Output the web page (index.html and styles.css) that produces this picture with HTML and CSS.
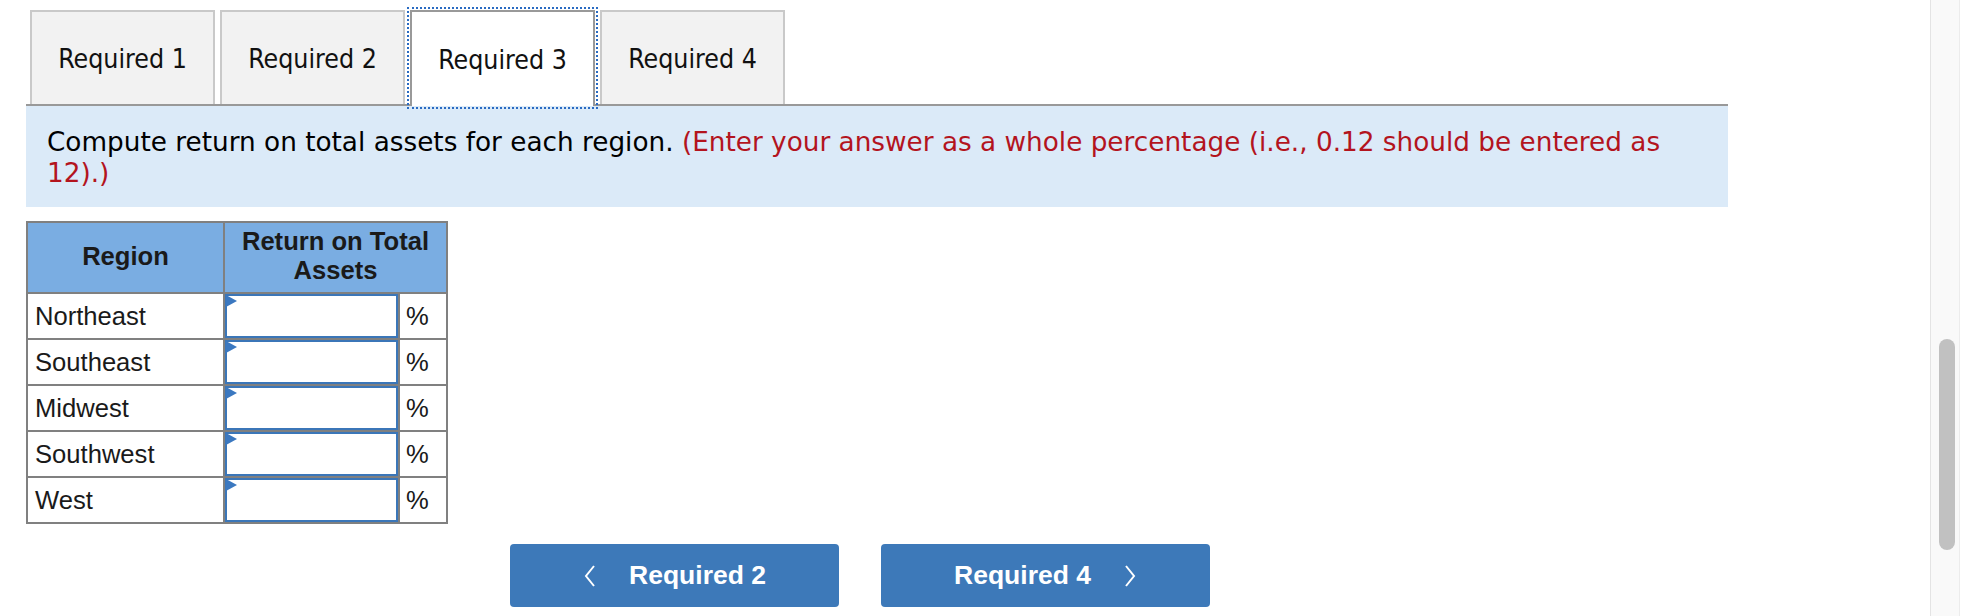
FILE: index.html
```html
<!DOCTYPE html>
<html lang="en">
<head>
<meta charset="utf-8">
<title>Required 3</title>
<link rel="stylesheet" href="styles.css">
</head>
<body>
<div class="page">
  <main class="content">
    <div class="tabs">
      <div class="tab">Required 1</div>
      <div class="tab">Required 2</div>
      <div class="tab tab-active">Required 3</div>
      <div class="tab">Required 4</div>
    </div>
    <div class="panel">
      <p class="instr">Compute return on total assets for each region. <span class="hint">(Enter your answer as a whole percentage (i.e., 0.12 should be entered as</span><br><span class="hint">12).)</span></p>
    </div>
    <table class="grid">
      <colgroup>
        <col class="col-name">
        <col class="col-input">
        <col class="col-pct">
      </colgroup>
      <thead>
        <tr>
          <th>Region</th>
          <th colspan="2">Return on Total<br>Assets</th>
        </tr>
      </thead>
      <tbody>
        <tr>
          <td class="c-name">Northeast</td>
          <td class="c-input"><div class="field"><span class="flag"></span><input type="text" aria-label="Northeast"></div></td>
          <td class="c-pct">%</td>
        </tr>
        <tr>
          <td class="c-name">Southeast</td>
          <td class="c-input"><div class="field"><span class="flag"></span><input type="text" aria-label="Southeast"></div></td>
          <td class="c-pct">%</td>
        </tr>
        <tr>
          <td class="c-name">Midwest</td>
          <td class="c-input"><div class="field"><span class="flag"></span><input type="text" aria-label="Midwest"></div></td>
          <td class="c-pct">%</td>
        </tr>
        <tr>
          <td class="c-name">Southwest</td>
          <td class="c-input"><div class="field"><span class="flag"></span><input type="text" aria-label="Southwest"></div></td>
          <td class="c-pct">%</td>
        </tr>
        <tr>
          <td class="c-name">West</td>
          <td class="c-input"><div class="field"><span class="flag"></span><input type="text" aria-label="West"></div></td>
          <td class="c-pct">%</td>
        </tr>
      </tbody>
    </table>
    <div class="nav">
      <button class="nav-btn" type="button">
        <svg class="chev" width="14" height="24" viewBox="0 0 14 24"><polyline points="11,2 3,12 11,22" fill="none" stroke="#fff" stroke-width="2"/></svg>
        <span>Required 2</span>
      </button>
      <button class="nav-btn" type="button">
        <span>Required 4</span>
        <svg class="chev" width="14" height="24" viewBox="0 0 14 24"><polyline points="3,2 11,12 3,22" fill="none" stroke="#fff" stroke-width="2"/></svg>
      </button>
    </div>
  </main>
  <div class="scrollbar"><div class="thumb"></div></div>
</div>
</body>
</html>
```

FILE: styles.css
```css
html, body {
  margin: 0;
  padding: 0;
  background: #fff;
}

.page {
  display: flex;
  width: 1970px;
  height: 616px;
  overflow: hidden;
}

.content {
  flex: 1;
  padding-left: 26px;
  padding-top: 10px;
}

.tabs {
  display: flex;
  gap: 5px;
  margin-left: 4px;
  align-items: flex-end;
}

.tab {
  width: 185px;
  height: 94px;
  box-sizing: border-box;
  border: 2px solid #c9c9c9;
  border-bottom: none;
  background: #f2f2f2;
  display: flex;
  align-items: center;
  justify-content: center;
  font-family: "DejaVu Sans", Verdana, sans-serif;
  font-stretch: condensed;
  font-size: 26.5px;
  color: #111;
}

.tab-active {
  background: #fff;
  border-color: #999;
  height: 96px;
  margin-bottom: -2px;
  position: relative;
  z-index: 1;
  outline: 2px dotted #2a6bc2;
  outline-offset: 1px;
}

.panel {
  width: 1702px;
  box-sizing: border-box;
  border-top: 2px solid #999;
  background: #dbeaf8;
  padding: 21px 40px 18px 21px;
}

.instr {
  margin: 0;
  font-family: "DejaVu Sans", Verdana, sans-serif;
  font-size: 26.3px;
  line-height: 31px;
  color: #000;
}

.hint {
  color: #b3141e;
}

.grid {
  margin-top: 14px;
  border-collapse: collapse;
  table-layout: fixed;
  width: 420px;
  border: 2px solid #808080;
  font-family: "Liberation Sans", Arial, sans-serif;
  font-size: 25.6px;
  color: #1a1a1a;
}

.col-name { width: 197px; }
.col-input { width: 175px; }
.col-pct { width: 48px; }

.grid th {
  background: #7aade2;
  border: 2px solid #808080;
  font-weight: bold;
  text-align: center;
  height: 66px;
  padding: 0 0 3px;
  line-height: 29px;
}

.grid td {
  border: 2px solid #808080;
  height: 44px;
  padding: 0;
}

.c-name {
  padding-left: 7px !important;
}

.c-pct {
  padding-left: 6px !important;
}

.field {
  position: relative;
  height: 44px;
}

.field input {
  display: block;
  width: 100%;
  height: 100%;
  box-sizing: border-box;
  border: 2px solid #3b76b8;
  margin: 0;
  padding: 0 6px;
  background: #fff;
  font: inherit;
}

.flag {
  position: absolute;
  left: 1px;
  top: 1px;
  width: 0;
  height: 0;
  border-left: 11px solid #3b78c0;
  border-top: 6px solid transparent;
  border-bottom: 6px solid transparent;
}

.nav {
  display: flex;
  gap: 42px;
  margin-top: 20px;
  padding-left: 484px;
}

.nav-btn {
  width: 329px;
  height: 63px;
  border: none;
  border-radius: 4px;
  background: #3d79b9;
  color: #fff;
  display: flex;
  align-items: center;
  justify-content: center;
  gap: 32px;
  font-family: "Liberation Sans", Arial, sans-serif;
  font-weight: bold;
  font-size: 26.5px;
  padding: 0;
}

.chev {
  display: block;
}

.scrollbar {
  width: 30px;
  box-sizing: border-box;
  margin-right: 10px;
  background: #f9f9f9;
  border-left: 1px solid #e4e4e4;
  border-right: 1px solid #ececec;
  padding-top: 339px;
}

.thumb {
  width: 16px;
  height: 211px;
  margin-left: 8px;
  border-radius: 8px;
  background: #c1c1c1;
}
```
